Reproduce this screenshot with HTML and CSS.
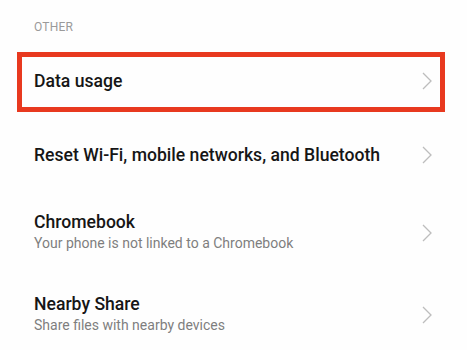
FILE: index.html
```html
<!DOCTYPE html>
<html>
<head>
<meta charset="utf-8">
<link rel="stylesheet" href="styles.css">
</head>
<body>
<div class="page">
  <div class="section-title">OTHER</div>
  <div class="row row-single highlighted">
    <div class="text"><div class="title">Data usage</div></div>
    <svg class="chev" width="10" height="18" viewBox="0 0 10 18"><path d="M1 1 L9 9 L1 17" fill="none" stroke="#bdbdbd" stroke-width="1.3"/></svg>
  </div>
  <div class="row row-single">
    <div class="text"><div class="title">Reset Wi-Fi, mobile networks, and Bluetooth</div></div>
    <svg class="chev" width="10" height="18" viewBox="0 0 10 18"><path d="M1 1 L9 9 L1 17" fill="none" stroke="#bdbdbd" stroke-width="1.3"/></svg>
  </div>
  <div class="row row-double">
    <div class="text"><div class="title">Chromebook</div><div class="sub">Your phone is not linked to a Chromebook</div></div>
    <svg class="chev" width="10" height="18" viewBox="0 0 10 18"><path d="M1 1 L9 9 L1 17" fill="none" stroke="#bdbdbd" stroke-width="1.3"/></svg>
  </div>
  <div class="row row-double">
    <div class="text"><div class="title">Nearby Share</div><div class="sub">Share files with nearby devices</div></div>
    <svg class="chev" width="10" height="18" viewBox="0 0 10 18"><path d="M1 1 L9 9 L1 17" fill="none" stroke="#bdbdbd" stroke-width="1.3"/></svg>
  </div>
</div>
</body>
</html>
```
FILE: styles.css
```css
html, body {
  margin: 0;
  padding: 0;
  background: #fefefe;
}
body {
  font-family: Roboto, "Liberation Sans", sans-serif;
  overflow: hidden;
}
.page {
  width: 467px;
  height: 350px;
}
.section-title {
  padding: 20px 34px 10px;
  font-size: 12px;
  line-height: 14px;
  color: #9a9a9a;
  letter-spacing: 0.2px;
}
.row {
  position: relative;
  display: flex;
  align-items: center;
  justify-content: space-between;
  padding: 0 35px 0 34px;
}
.row-single {
  height: 74px;
}
.row-double {
  height: 82px;
}
.title {
  font-size: 17.6px;
  line-height: 20px;
  font-weight: 500;
  color: #161616;
}
.sub {
  font-size: 14px;
  line-height: 22px;
  color: #7e7e7e;
}
.chev {
  display: block;
  flex: none;
}
.highlighted::after {
  content: "";
  position: absolute;
  left: 17px;
  right: 22px;
  top: 8px;
  bottom: 6px;
  border: 5px solid #e8391f;
}
```
